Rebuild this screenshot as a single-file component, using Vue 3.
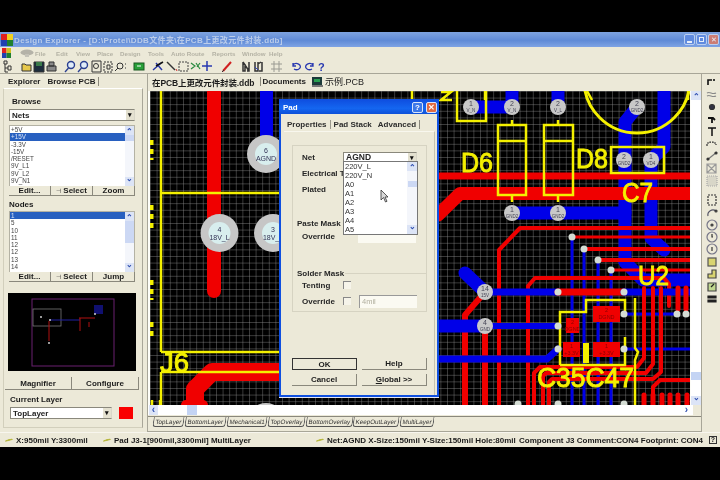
<script setup>
const menus = [
  ['File', 21], ['Edit', 20], ['View', 21], ['Place', 23], ['Design', 28], ['Tools', 23],
  ['Auto Route', 41], ['Reports', 30], ['Window', 27], ['Help', 20]
]
const nets = ['+5V', '+15V', '-3.3V', '-15V', '/RESET', '9V_L1', '9V_L2', '9V_N1']
const nodes = ['1', '5', '10', '11', '12', '12', '13', '14']
const netChoices = ['220V_L', '220V_N', 'A0', 'A1', 'A2', 'A3', 'A4', 'A5']
const layers = ['TopLayer', 'BottomLayer', 'Mechanical1', 'TopOverlay', 'BottomOverlay', 'KeepOutLayer', 'MultiLayer']

const R = '#f00000', B = '#0000e8', Y = '#f4f000'
const traces = [
  { d: 'M214 91V291', c: R, w: 14 },
  { d: 'M266.500 91V140', c: B, w: 13 },
  { d: 'M280 372H212L195 389V410', c: R, w: 18 },
  { d: 'M471 107H512', c: B, w: 13 },
  { d: 'M512 91V107', c: B, w: 13 },
  { d: 'M558 91V107', c: B, w: 13 },
  { d: 'M637 107L625 122V262', c: B, w: 13 },
  { d: 'M664 91V147L651 160V238L664 250', c: B, w: 13 },
  { d: 'M625 262L643 280H690', c: B, w: 13 },
  { d: 'M512 213H625', c: B, w: 13 },
  { d: 'M572 237V405M584 249V405M598 260V405M611 270V405', c: B, w: 3 },
  { d: 'M440 176H690', c: R, w: 7 },
  { d: 'M690 193.500H460L438 215', c: R, w: 13 },
  { d: 'M690 228H520L499 250V405', c: R, w: 4 },
  { d: 'M572 237H690', c: R, w: 3 },
  { d: 'M584 249H690', c: R, w: 4 },
  { d: 'M598 260H690', c: R, w: 4 },
  { d: 'M611 270H690', c: R, w: 3 },
  { d: 'M669 306V284L664 278H535L528 286V405', c: R, w: 4 },
  { d: 'M465 273L485 292', c: B, w: 13 },
  { d: 'M485 292H558', c: B, w: 7 },
  { d: 'M558 292H624', c: R, w: 7 },
  { d: 'M624 292H690', c: B, w: 7 },
  { d: 'M485 292L465 315V405', c: R, w: 6 },
  { d: 'M440 326H485', c: B, w: 13 },
  { d: 'M485 326H558', c: B, w: 6 },
  { d: 'M485 326V405', c: R, w: 6 },
  { d: 'M440 359H547L558 349', c: B, w: 7 },
  { d: 'M624 314H677', c: B, w: 3 },
  { d: 'M624 349H690', c: B, w: 3 },
  { d: 'M644 288V358L637 367H540L534 373V405', c: R, w: 4 },
  { d: 'M653 288V364L646 373H546L543 376V405', c: R, w: 4 },
  { d: 'M661 288V372L653 379H552L549 382V405', c: R, w: 4 },
  { d: 'M678 288V309M686 288V309', c: R, w: 5 },
  { d: 'M690 380H660L653 387V405', c: R, w: 4 },
  { d: 'M644 395V405M653 395V405M662 395V405M670 395V405M678 395V405M687 395V405', c: R, w: 5 },
  { d: 'M186 405H203', c: R, w: 10 }
]
const outlines = [
  'M161 91V352M161 372V405',
  'M161 193H280',
  'M161 352H280M161 372H280',
  'M457 91V121H486V91',
  'M498 125H526V195H498ZM498 141H526',
  'M544 125H573V195H544ZM544 141H573',
  'M512 120V125M512 195V202M558 120V125M558 195V202',
  'M611 147H664V173H611Z',
  'M560 365V312H586V300H625V312M625 337V365H560',
  'M635 298V348L638 352L635 360V405',
  'M412 91V100M485 91V100M587 91L592 100M688 91V100M152 400V405M160 400V405'
]
const bigPads = [
  { x: 219.500, y: 233, n: '4', t: '18V_L' },
  { x: 266, y: 154, n: '6', t: 'AGND' },
  { x: 273, y: 233, n: '3', t: '18V_L' },
  { x: 266, y: 422, n: '', t: '' }
]
const midPads = [
  { x: 471, y: 107, n: '1', t: 'V_N' },
  { x: 512, y: 107, n: '2', t: 'V_N' },
  { x: 558, y: 107, n: '2', t: 'V_L' },
  { x: 637, y: 107, n: '2', t: 'GND2' },
  { x: 624, y: 160, n: '2', t: 'GND2' },
  { x: 651, y: 160, n: '1', t: 'VD4' },
  { x: 512, y: 213, n: '1', t: 'GND2' },
  { x: 558, y: 213, n: '1', t: 'GND2' },
  { x: 485, y: 292, n: '14', t: '15V' },
  { x: 485, y: 326, n: '4', t: 'GND' }
]
const dots = [
  [572, 237], [584, 249], [598, 260], [611, 270], [558, 292], [624, 292], [624, 314], [558, 326],
  [558, 349], [624, 349], [677, 314], [686, 314], [518, 404], [558, 404], [624, 404]
]
const smd = [
  { x: 566, y: 318, w: 13, h: 15, n: '2', t: 'DGND' },
  { x: 593, y: 306, w: 27, h: 16, n: '2', t: 'DGND' },
  { x: 563, y: 342, w: 17, h: 15, n: '1', t: '+3.3V' },
  { x: 593, y: 342, w: 27, h: 15, n: '1', t: '+3.3V' }
]
const designators = [
  { t: 'D6', x: 461, y: 172, l: 32 },
  { t: 'D8', x: 576, y: 168, l: 32 },
  { t: 'C7', x: 622, y: 202, l: 31 },
  { t: 'U2', x: 638, y: 285, l: 31 },
  { t: 'C35C47', x: 537, y: 387, l: 97 },
  { t: 'J6', x: 160, y: 372, l: 29 }
]
</script>

<template>
  <div class="screen">
    <div class="win">
      <header class="title">
        <svg class="app-ico" width="12" height="12" viewBox="0 0 12 12"><rect width="6" height="6" fill="#e02020"/><rect x="6" width="6" height="6" fill="#f0d020"/><rect y="6" width="6" height="6" fill="#2040b0"/><rect x="6" y="6" width="6" height="6" fill="#208030"/></svg>
        <span class="title-text">Design Explorer - [D:\Protel\DDB文件夹\在PCB上更改元件封装.ddb]</span>
        <div class="caps">
          <span class="cap"><i class="min"></i></span>
          <span class="cap"><i class="rest"></i></span>
          <span class="cap close">✕</span>
        </div>
      </header>

      <nav class="menu">
        <svg class="app-ico" width="9" height="11" viewBox="0 0 9 11"><rect width="4.500" height="5" fill="#e02020"/><rect x="4.500" width="4.500" height="5" fill="#d0c020"/><rect y="5" width="4.500" height="5" fill="#2040b0"/><rect x="4.500" y="5" width="4.500" height="5" fill="#208030"/></svg>
        <svg class="menu-ghost" width="14" height="8" viewBox="0 0 14 8"><ellipse cx="7" cy="3.500" rx="6.500" ry="3" fill="#b4b2a8"/><rect x="5" y="5" width="4" height="3" fill="#c4c2b8"/></svg>
        <span v-for="m in menus" :key="m[0]" class="menu-item" :style="{ width: m[1] + 'px' }">{{ m[0] }}</span>
      </nav>

      <div class="tools">
        <svg width="335" height="15" viewBox="0 0 335 15">
          <g fill="none" stroke="#333" stroke-width="1">
            <path d="M4 2h3v3H4zM5 5v8h3M5 9h3M8 7h3v4H8z"/>
            <path d="M22 5h3l1 1h5v6H22z" fill="#e6c84c"/>
            <path d="M34 3h10v10H34z" fill="#1c2c3c"/><rect x="36" y="3" width="6" height="4" fill="#3a7a4a" stroke="none"/>
            <path d="M47 7h9v5h-9zM49 3h5v4h-5z" fill="#888"/>
            <g stroke="#2a3f90" stroke-width="1.400"><circle cx="71" cy="6" r="3.500" fill="#e0ecf8"/><path d="M68.500 9L65 13"/><circle cx="84" cy="6" r="3.500" fill="#e0ecf8"/><path d="M81.500 9L78 13"/></g>
            <path d="M92 2h9v11h-9z"/><circle cx="96" cy="7" r="2.500"/><path d="M104 3h8v10h-8z" stroke-dasharray="2 1"/><path d="M107 6h3v4h-3z"/>
            <circle cx="120" cy="7" r="3"/><path d="M118 9l-3 3M125 5h1M125 9h1"/>
            <rect x="134" y="4" width="10" height="7" fill="#28a038" stroke="#185820"/><path d="M137 7h4" stroke="#fff"/>
            <path d="M153 11l8-7M156 4l6 7" stroke="#2838a8" stroke-width="1.500"/><path d="M156 7l7-4" stroke="#111" stroke-width="1.500"/>
            <path d="M167 3l8 8" stroke="#333" stroke-width="1.500"/><path d="M176 10l1 2" stroke="#d03030"/>
            <rect x="179" y="3" width="9" height="9" stroke="#444" stroke-dasharray="2 1"/>
            <path d="M191 4l4 3-4 3M196 4l4 6M200 4l-3 4" stroke="#2a8a40" stroke-width="1.200"/>
            <path d="M207 2v10M202 7h10" stroke="#2838b0" stroke-width="1.500"/>
            <path d="M223 12l8-9" stroke="#d02020" stroke-width="2"/><path d="M222 13l2-2" stroke="#333"/>
            <path d="M243 3v9h2V5M249 3v9h-2M243 3l6 9" stroke="#333" stroke-width="1.500"/>
            <path d="M255 3v9h3V3M262 3v9h-3M258 5l3-2" stroke="#333" stroke-width="1.500"/><path d="M255 8l3 3" stroke="#2a40c0"/>
            <path d="M274 2v11M279 2v11M271 5h11M271 10h11" stroke="#9a9a92"/>
            <path d="M293 6a4 3 0 1 1 1 4M293 4v3h3" stroke="#2838b0" stroke-width="1.300"/>
            <path d="M313 6a4 3 0 1 0 -1 4M313 4v3h-3" stroke="#2838b0" stroke-width="1.300"/>
          </g>
          <text x="318" y="12" class="tool-q">?</text>
        </svg>
      </div>

      <div class="main">
        <aside class="side">
          <div class="side-tabs">
            <span class="side-tab">Explorer</span>
            <span class="side-tab active">Browse PCB</span>
          </div>
          <div class="side-panel">
            <div class="heading browse-h">Browse</div>
            <div class="combo nets-combo"><span>Nets</span><i class="drop">▾</i></div>
            <div class="listbox">
              <ul class="rows">
                <li v-for="(n, i) in nets" :key="i" :class="{ sel: i === 1 }">{{ n }}</li>
              </ul>
              <div class="sbar"><b>⌃</b><i class="thumb"></i><b class="down">⌄</b></div>
            </div>
            <div class="btns">
              <button>Edit...</button><button><small>⊣</small> Select</button><button>Zoom</button>
            </div>
            <div class="heading nodes-h">Nodes</div>
            <div class="listbox">
              <ul class="rows">
                <li v-for="(n, i) in nodes" :key="i" :class="{ sel: i === 0 }">{{ n }}</li>
              </ul>
              <div class="sbar"><b>⌃</b><i class="thumb long"></i><b class="down">⌄</b></div>
            </div>
            <div class="btns">
              <button>Edit...</button><button><small>⊣</small> Select</button><button>Jump</button>
            </div>
            <svg class="minimap" width="128" height="78" viewBox="8 292 128 78">
              <rect x="8" y="292" width="128" height="78" fill="#000"/>
              <rect x="32" y="298" width="82" height="67" fill="none" stroke="#6a2070" stroke-width="1"/>
              <rect x="33" y="308" width="28" height="17" fill="none" stroke="#777" stroke-width=".8"/>
              <path d="M50 319H80" stroke="#2020a0" fill="none"/>
              <path d="M49 320V340M79 317H95M80 317V330M89 321V326" stroke="#b01010" fill="none"/>
              <rect x="94" y="304" width="9" height="9" fill="#101070"/>
              <g fill="#ccc"><circle cx="41" cy="316" r="1"/><circle cx="95" cy="313" r="1"/><circle cx="49" cy="342" r="1"/><circle cx="50" cy="319" r="1"/></g>
            </svg>
            <div class="btns mag">
              <button>Magnifier</button><button>Configure</button>
            </div>
            <div class="heading layer-h">Current Layer</div>
            <div class="layer-row">
              <div class="combo layer-combo"><span>TopLayer</span><i class="drop">▾</i></div>
              <span class="swatch"></span>
            </div>
          </div>
        </aside>

        <section class="center">
          <div class="doc-tabs">
            <span class="doc-tab first">在PCB上更改元件封装.ddb</span>
            <span class="doc-tab sep">Documents</span>
            <svg width="11" height="10" viewBox="0 0 11 10" class="doc-ico"><rect width="10" height="8" fill="#1c3a3a"/><rect x="2" y="2" width="6" height="3" fill="#28a050"/><rect y="8" width="11" height="2" fill="#777"/></svg>
            <span class="doc-tab cjk">示例.PCB</span>
          </div>
          <div class="canvas-row">
            <svg class="pcb" width="540" height="314" viewBox="150 91 540 314">
              <defs>
                <pattern id="grid" x="150" y="91" width="6.600" height="6.600" patternUnits="userSpaceOnUse">
                  <path d="M6.600 0H0V6.600" fill="none" stroke="#8c8c8c" stroke-width=".8"/>
                </pattern>
              </defs>
              <rect x="150" y="91" width="540" height="314" fill="#000"/>
              <rect x="150" y="91" width="540" height="314" fill="url(#grid)"/>
              <path v-for="(t, i) in traces" :key="i" :d="t.d" :stroke="t.c" :stroke-width="t.w" fill="none" stroke-linecap="round" stroke-linejoin="round"/>
              <g fill="#f00000"><rect v-for="(s, i) in smd" :key="i" :x="s.x" :y="s.y" :width="s.w" :height="s.h"/></g>
              <g fill="#8c0000" text-anchor="middle" class="smd-text">
                <template v-for="(s, i) in smd" :key="i">
                  <text :x="s.x + s.w / 2" :y="s.y + 6">{{ s.n }}</text>
                  <text :x="s.x + s.w / 2" :y="s.y + 13">{{ s.t }}</text>
                </template>
              </g>
              <circle cx="637" cy="80" r="53" fill="none" :stroke="Y" stroke-width="3"/>
              <path v-for="(o, i) in outlines" :key="i" :d="o" fill="none" :stroke="Y" stroke-width="2.500"/>
              <path d="M586 343V363" :stroke="Y" stroke-width="6" fill="none"/>
              <path d="M151 140V160M151 205V230M151 280V300M151 322V340" :stroke="Y" stroke-width="5" stroke-dasharray="5 4" fill="none"/>
              <path d="M441 92H451L441 100H452" :stroke="Y" stroke-width="2.500" fill="none"/>
              <g v-for="(p, i) in bigPads" :key="'b' + i">
                <circle :cx="p.x" :cy="p.y" r="19" fill="#c6c6c6"/>
                <circle :cx="p.x" :cy="p.y" r="11" fill="#d8eeee"/>
                <text :x="p.x" :y="p.y - 1" text-anchor="middle" class="pad-big">{{ p.n }}</text>
                <text :x="p.x" :y="p.y + 7" text-anchor="middle" class="pad-big">{{ p.t }}</text>
              </g>
              <g v-for="(p, i) in midPads" :key="'m' + i">
                <circle :cx="p.x" :cy="p.y" r="8" fill="#c8c8c8"/>
                <text :x="p.x" :y="p.y - 1" text-anchor="middle" class="pad-mid">{{ p.n }}</text>
                <text :x="p.x" :y="p.y + 5" text-anchor="middle" class="pad-small">{{ p.t }}</text>
              </g>
              <circle v-for="(d, i) in dots" :key="'d' + i" :cx="d[0]" :cy="d[1]" r="3.500" fill="#d4dcd4"/>
              <circle cx="386" cy="425" r="19" fill="#c6c6c6"/>
              <text v-for="d in designators" :key="d.t" :x="d.x" :y="d.y" :textLength="d.l" lengthAdjust="spacingAndGlyphs" class="desig">{{ d.t }}</text>
            </svg>
            <div class="vbar"><b>⌃</b><span class="vthumb"></span><b>⌄</b></div>
          </div>
          <div class="hbar"><b>‹</b><span class="hthumb"></span><b class="hright">›</b></div>
          <div class="layer-tabs">
            <span v-for="(l, i) in layers" :key="l" class="ltab" :class="{ on: i === 0 }">{{ l }}</span>
          </div>
        </section>

        <aside class="rail">
          <svg width="18" height="230" viewBox="702 78 18 230">
            <g fill="none" stroke="#333" stroke-width="1.200">
              <path d="M708 85V80h4M714 79v2" stroke-width="1.600" stroke="#111"/>
              <path d="M707 93c3-2 5 2 9 0M707 96c3-2 5 2 9 0" stroke="#888"/>
              <circle cx="712" cy="107" r="2.500" fill="#334"/>
              <path d="M708 118h5l2 2M712 118v5" stroke="#111" stroke-width="1.800"/>
              <path d="M708 128h8M712 128v8" stroke="#111" stroke-width="1.500"/>
              <path d="M707 146v-3h3v-1h3v1h3v2" stroke-dasharray="2 1"/>
              <path d="M707 160l10-8" stroke="#777"/><circle cx="708" cy="159" r="1" fill="#333"/><circle cx="716" cy="153" r="1" fill="#333"/>
              <path d="M707 164h9v9h-9zM707 164l9 9M716 164l-9 9" stroke="#999"/>
              <path d="M707 176h10v10h-10z" stroke="#aaa" fill="#d8d6c8" stroke-dasharray="1 1"/>
              <path d="M708 195h8v10h-8z" stroke-dasharray="2 1"/>
              <path d="M708 216a5 5 0 0 1 8-5" stroke="#556"/><circle cx="716" cy="211" r="1"/>
              <circle cx="712" cy="225" r="5" stroke="#778"/><circle cx="712" cy="225" r="1"/>
              <circle cx="712" cy="237" r="5" stroke="#778"/><path d="M712 234v3h1"/>
              <circle cx="712" cy="249" r="5" stroke="#778"/><path d="M712 247v4"/>
              <rect x="708" y="258" width="8" height="8" fill="#d8d470" stroke="#555"/>
              <path d="M708 278v-4h4v-4h4v8z" fill="#d8d470" stroke="#444"/>
              <path d="M708 283h8v8h-8z" fill="#c0d890" stroke="#444"/><path d="M711 287l3-3" stroke="#222"/>
              <path d="M708 296h2v2h-2zM711 296h2v2h-2zM714 296h2v2h-2zM708 300h2v2h-2zM711 300h2v2h-2zM714 300h2v2h-2z" stroke="#222" fill="#222"/>
            </g>
          </svg>
        </aside>
      </div>

      <footer class="status">
        <span class="st st1"><i class="tick"></i>X:950mil Y:3300mil</span>
        <span class="st st2"><i class="tick"></i>Pad J3-1[900mil,3300mil]  MultiLayer</span>
        <span class="st st3"><i class="tick"></i>Net:AGND X-Size:150mil Y-Size:150mil Hole:80mil</span>
        <span class="st st4">Component J3 Comment:CON4 Footprint: CON4</span>
        <span class="help-ico">?</span>
      </footer>
    </div>

    <div class="dialog">
      <div class="dlg-title">
        <span>Pad</span>
        <div class="dlg-caps"><b class="q">?</b><b class="x">✕</b></div>
      </div>
      <div class="dlg-tabs">
        <span>Properties</span><span class="mid">Pad Stack</span><span class="act">Advanced</span>
      </div>
      <div class="dlg-body">
        <div class="dlg-group">
          <div class="f net"><label>Net</label><div class="combo dlg-combo"><span>AGND</span><i class="drop">▾</i></div></div>
          <div class="f g4"><label>Electrical Ty</label></div>
          <div class="f g4"><label>Plated</label></div>
          <div class="f g22 out"><label>Paste Mask</label></div>
          <div class="f g1"><label>Override</label><span class="ghost"></span></div>
          <div class="f g25 out sm"><label>Solder Mask</label><span class="rule"></span></div>
          <div class="f"><label>Tenting</label><i class="check"></i></div>
          <div class="f g4"><label>Override</label><i class="check"></i><span class="mil">4mil</span></div>
        </div>
        <div class="dlg-btns">
          <button class="def">OK</button><button>Help</button>
          <button>Cancel</button><button><u>G</u>lobal &gt;&gt;</button>
        </div>
      </div>
      <div class="droplist">
        <ul>
          <li v-for="c in netChoices" :key="c">{{ c }}</li>
        </ul>
        <div class="sbar tall"><b>⌃</b><i class="thumb mini"></i><b class="down">⌄</b></div>
      </div>
      <svg class="cursor" width="9" height="14" viewBox="0 0 9 14"><path d="M1 1V11L3.500 8.500L5.500 13L7 12.300L5 8H8Z" fill="#d8d8d8" stroke="#333" stroke-width=".8"/></svg>
    </div>
  </div>
</template>

<style>
html, body { margin: 0; background: #000; }
</style>

<style scoped>
* { box-sizing: border-box; }
ul { list-style: none; margin: 0; padding: 0; }
button { font: inherit; color: inherit; padding: 0; }
.screen {
  position: relative; width: 720px; height: 480px; overflow: hidden; background: #000; padding-top: 32px;
  font-family: "Liberation Sans", "Noto Sans CJK SC", sans-serif; font-size: 8px; color: #1c1c1c;
  filter: blur(.35px);
}
.win { height: 415px; background: #ece9d8; display: flex; flex-direction: column; }
.title {
  height: 15px; display: flex; align-items: center; padding: 0 1px 0 1px;
  background: linear-gradient(#7ea3df, #5f8ad6 55%, #7ea3e4);
}
.title-text { color: #d6e0f0; font-weight: bold; font-size: 8px; letter-spacing: .35px; opacity: .75; }
.app-ico { flex: none; margin-right: 1px; }
.caps { margin-left: auto; display: flex; gap: 1px; opacity: .85; }
.cap { width: 11px; height: 11px; border-radius: 2px; background: #5f8ae0; border: 1px solid #c8d8f4; display: flex; align-items: center; justify-content: center; color: #fff; font-size: 7px; line-height: 1; }
.cap.close { background: #dd7a64; }
.min { width: 5px; height: 2px; background: #fff; margin-top: 5px; }
.rest { width: 5px; height: 5px; border: 1px solid #fff; }
.menu { height: 12px; display: flex; align-items: center; padding-left: 2px; color: #b4b2a4; font-weight: bold; font-size: 6.200px; }
.menu-ghost { margin: 0 1px 0 8px; }
.menu-item { flex: none; white-space: nowrap; }
.tools { height: 15px; border-bottom: 1px solid #a8a698; display: flex; align-items: center; }
.tool-q { font-size: 11px; font-weight: bold; fill: #2838b0; }
.main { flex: 1; display: flex; min-height: 0; }
.side { width: 147px; flex: none; display: flex; flex-direction: column; }
.side-tabs { height: 14px; display: flex; align-items: center; padding-left: 8px; gap: 7px; font-weight: bold; font-size: 8px; white-space: nowrap; }
.side-tab.active { border-right: 1px solid #8a887c; padding-right: 3px; }
.side-panel { height: 340px; margin: 0 4px 0 3px; padding: 8px 0 0 5px; border: 1px solid #d2cfbc; border-top: 1px solid #fff; border-right: 1px solid #a8a698; }
.heading { height: 10px; font-weight: bold; line-height: 10px; font-size: 8px; white-space: nowrap; }
.browse-h { margin-left: 3px; }
.combo { display: flex; align-items: center; background: #fff; border: 1px solid #8a887c; border-right-color: #d8d6c8; padding-left: 2px; font-weight: bold; }
.drop { margin-left: auto; width: 8px; height: 100%; background: #e4e1d0; color: #111; font-style: normal; font-size: 7px; line-height: 10px; text-align: center; }
.nets-combo { width: 126px; height: 12px; margin: 2px 0 4px; font-size: 8px; }
.listbox { width: 126px; height: 61px; background: #fff; display: flex; border: 1px solid #b4b2a4; border-bottom: 0; }
.rows { flex: 1; font-size: 6.300px; color: #444; line-height: 7.300px; }
.rows li { height: 7.300px; padding-left: 1px; }
.rows li.sel { background: #2860c0; color: #dbe6f8; }
.sbar { width: 9px; flex: none; display: flex; flex-direction: column; background: #f4f6fb; color: #3050b0; align-items: center; }
.sbar b { height: 9px; width: 9px; background: #dce4f6; font-size: 8px; line-height: 11px; text-align: center; font-weight: bold; }
.sbar .down { margin-top: auto; line-height: 3px; }
.thumb { width: 9px; height: 6px; background: #ccd8f4; }
.thumb.long { height: 22px; }
.thumb.mini { height: 6px; margin-top: 10px; }
.btns { width: 126px; height: 10px; display: flex; font-weight: bold; font-size: 8px; }
.btns button { flex: 1; border: 0; border-right: 1px solid #8a887c; border-bottom: 1px solid #8a887c; background: #ece9d8; line-height: 9px; white-space: nowrap; }
.btns small { font-size: 6px; font-weight: normal; }
.nodes-h { margin-top: 4px; margin-bottom: 1px; }
.minimap { display: block; margin: 11px 0 6px -1px; }
.btns.mag { width: 134px; height: 13px; margin-left: -4px; }
.layer-h { margin-top: 5px; margin-left: 1px; margin-bottom: 2px; }
.layer-row { display: flex; align-items: center; gap: 7px; margin-left: 1px; }
.layer-combo { width: 102px; height: 12px; font-size: 8px; color: #222; }
.swatch { width: 14px; height: 12px; background: #fa0000; }
.center { width: 555px; flex: none; display: flex; flex-direction: column; border-left: 1px solid #a8a698; border-right: 1px solid #a8a698; }
.doc-tabs { height: 17px; display: flex; align-items: center; padding: 0 0 2px 4px; font-weight: bold; font-size: 8px; white-space: nowrap; }
.doc-tab.first { letter-spacing: -.1px; padding-right: 6px; font-size: 8.500px; }
.doc-tab.sep { border-left: 1px solid #8a887c; padding: 0 6px 0 1px; }
.doc-ico { margin-right: 2px; }
.doc-tab.cjk { font-size: 9px; font-weight: normal; }
.canvas-row { height: 314px; display: flex; padding-left: 2px; background: #fdfdf8; }
.pcb { display: block; flex: none; }
.smd-text { font-size: 5.500px; }
.pad-big { font-size: 7px; fill: #335; }
.pad-mid { font-size: 7px; fill: #445; }
.pad-small { font-size: 4.500px; fill: #445; }
.desig { font-family: "Liberation Sans", sans-serif; font-size: 27px; fill: #f4f000; stroke: #f4f000; stroke-width: .9px; }
.vbar { flex: none; width: 10px; margin-left: 1px; background: #fff; display: flex; flex-direction: column; color: #3050b0; align-items: center; font-size: 8px; }
.vbar b { width: 100%; height: 9px; background: #dce4f6; text-align: center; line-height: 11px; }
.vbar b:last-child { line-height: 3px; margin-top: auto; }
.vthumb { width: 100%; height: 8px; margin-top: 272px; background: #c4d4f4; }
.hbar { height: 10px; margin-right: 8px; background: #fff; display: flex; align-items: center; color: #3050b0; font-size: 10px; line-height: 9px; padding-left: 1px; }
.hbar b { width: 9px; text-align: center; background: #dce4f6; height: 10px; }
.hthumb { width: 10px; height: 10px; background: #c4d4f4; margin-left: 29px; }
.hright { margin-left: auto; margin-right: 2px; background: transparent !important; }
.layer-tabs { flex: 1; display: flex; align-items: flex-start; padding-left: 5px; border-top: 1px solid #8a887c; border-bottom: 1px solid #a8a698; font-size: 6.300px; color: #333; margin-top: 1px; gap: 1px; }
.ltab { height: 10px; line-height: 9px; padding: 0 1.500px; border-left: 1px solid #555; border-right: 1px solid #555; border-bottom: 1px solid #555; border-radius: 0 0 3px 3px; transform: skewX(-8deg); white-space: nowrap; }
.rail { flex: 1; min-width: 0; padding-top: 4px; }
.status { height: 15px; flex: none; font-weight: bold; font-size: 8px; display: flex; align-items: center; white-space: pre; border-top: 1px solid #f8f6ee; }
.st { display: flex; align-items: center; flex: none; }
.tick { width: 8px; height: 3px; margin-right: 3px; border-top: 2px solid #b8b840; border-radius: 50% 50% 0 0; transform: rotate(-15deg); }
.st1 { margin-left: 5px; width: 98px; }
.st2 { width: 213px; }
.st3 { width: 203px; }
.st4 { width: 190px; }
.help-ico { margin-left: auto; margin-right: 3px; width: 8px; height: 8px; border: 1px solid #333; font-size: 7px; line-height: 6px; text-align: center; }

.dialog { position: absolute; left: 279px; top: 99px; width: 160px; height: 298px; background: #ece9d8; border: 2px solid #1050e0; border-top: 1px solid #1050e0; display: flex; flex-direction: column; box-shadow: 0 1px 0 #e8e8f0; }
.dlg-title { height: 14px; flex: none; margin: 0 -2px; padding: 0 2px 0 4px; background: linear-gradient(#0f4fe0, #1466f0 60%, #0d50d8); color: #fff; font-weight: bold; font-size: 8px; display: flex; align-items: center; }
.dlg-caps { margin-left: auto; display: flex; gap: 3px; }
.dlg-caps b { width: 11px; height: 11px; border: 1px solid #d8e4fa; border-radius: 2px; text-align: center; line-height: 10px; font-size: 8px; }
.q { background: #3c78e8; }
.x { background: #e06a40; }
.dlg-tabs { height: 17px; flex: none; display: flex; align-items: center; padding: 3px 0 0 6px; font-weight: bold; font-size: 8px; white-space: nowrap; }
.dlg-tabs span { color: #2c2c2c; }
.dlg-tabs .mid { margin-left: 3px; padding-left: 3px; border-left: 1px solid #9a988c; }
.dlg-tabs .act { margin-left: 6px; padding-right: 3px; border-right: 1px solid #8a887c; }
.dlg-body { flex: 1; margin: 0 2px 0 3px; border-top: 1px solid #f8f7ee; border-right: 1px solid #c4c2b0; padding: 13px 7px 0 8px; display: flex; flex-direction: column; }
.dlg-group { height: 167px; border: 1px solid #d6d3c2; padding: 5px 0 0 9px; font-weight: bold; font-size: 8px; }
.f { height: 12px; display: flex; align-items: center; position: relative; color: #262626; white-space: nowrap; }
.f label { width: 41px; flex: none; }
.dlg-combo { width: 74px; height: 11px; font-size: 8.500px; }
.g4 { margin-top: 4px; }
.g22 { margin-top: 22px; }
.g1 { margin-top: 1px; }
.g25 { margin-top: 25px; }
.out { margin-left: -5px; }
.out label { width: auto; }
.rule { flex: 1; height: 1px; background: #d6d3c2; margin-left: 1px; }
.check { width: 8px; height: 8px; background: #f6f4ea; border-left: 1px solid #888; border-top: 1px solid #888; }
.mil { width: 58px; height: 13px; margin-left: 8px; background: #fbfaf2; border-left: 1px solid #999; border-top: 1px solid #999; color: #b0ae9e; font-weight: normal; font-size: 7.500px; line-height: 11px; padding-left: 2px; }
.ghost { width: 58px; height: 8px; margin-left: 15px; margin-top: 5px; background: #fbfaf2; }
.dlg-btns { display: grid; grid-template-columns: 65px 65px; column-gap: 5px; row-gap: 4px; margin-top: 46px; font-weight: bold; font-size: 8px; }
.dlg-btns button { height: 12px; border: 0; border-right: 1px solid #8a887c; border-bottom: 1px solid #8a887c; background: #ece9d8; line-height: 11px; }
.dlg-btns button.def { border: 1px solid #333; }
.droplist { position: absolute; left: 62px; top: 61px; width: 75px; height: 74px; background: #fff; border: 1px solid #777; display: flex; }
.droplist ul { flex: 1; font-size: 7.500px; line-height: 9px; color: #333; }
.droplist li { height: 9px; padding-left: 1px; }
.sbar.tall { width: 10px; }
.sbar.tall b { width: 10px; }
.cursor { position: absolute; left: 99px; top: 89px; }
</style>
